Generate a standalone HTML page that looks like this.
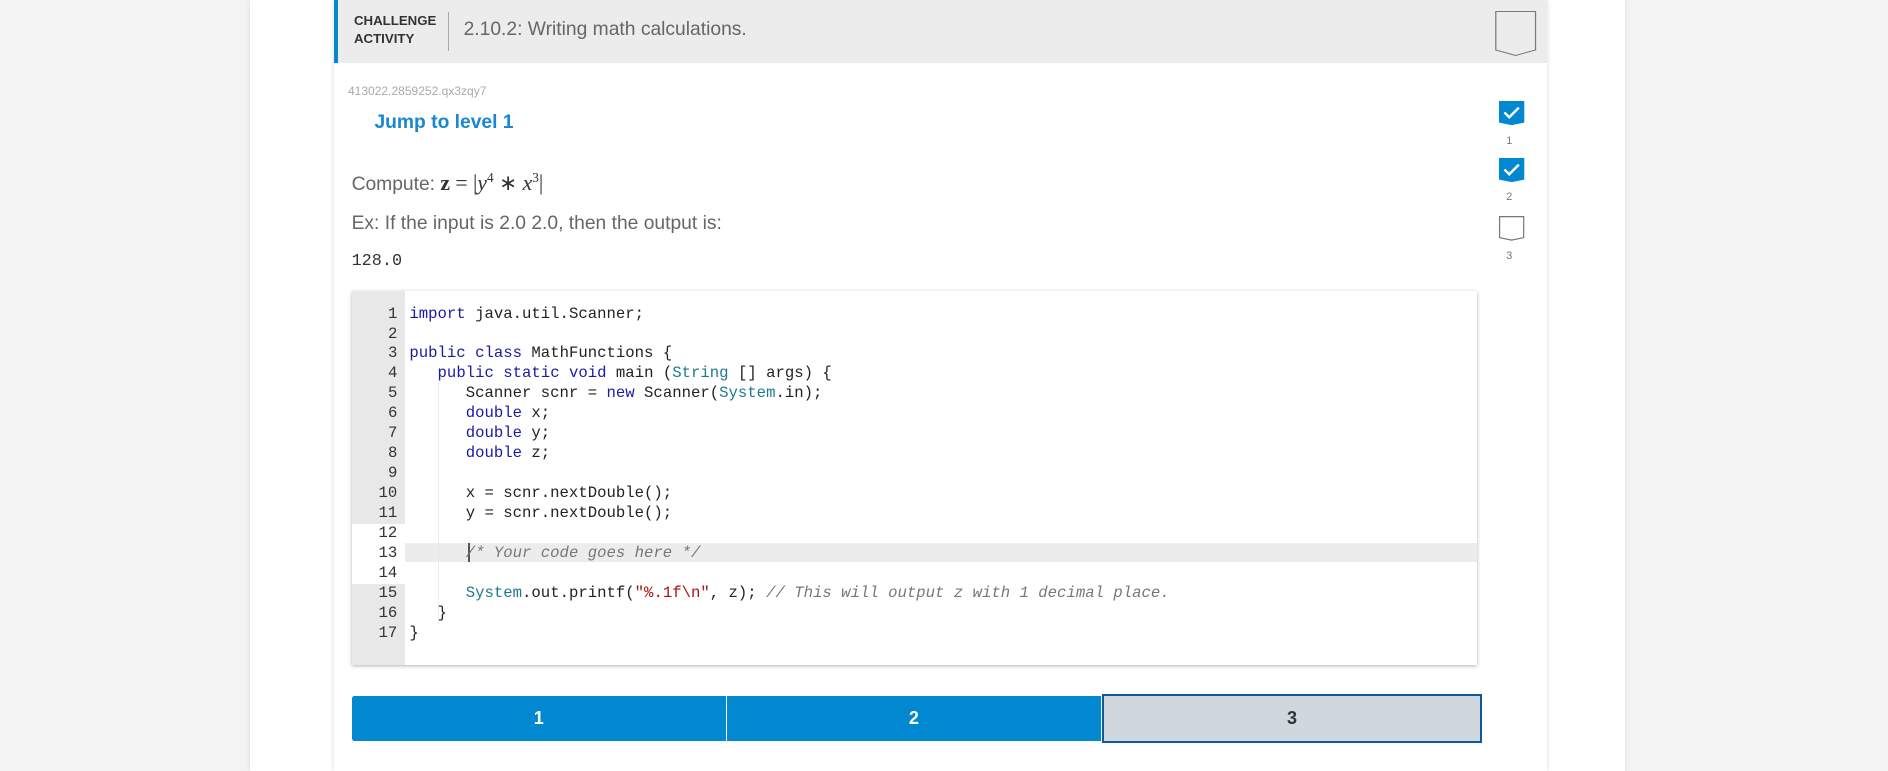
<!DOCTYPE html>
<html><head><meta charset="utf-8"><style>
html,body{margin:0;padding:0;}
body{width:1568px;height:640px;overflow:hidden;background:#f3f3f3;zoom:1.20408;font-family:"Liberation Sans",sans-serif;position:relative;}
.abs{position:absolute;}
#card{left:208px;top:0;width:1142px;height:640px;background:#fff;box-shadow:0 0 3px rgba(0,0,0,.12);}
#inner{left:277px;top:0;width:1008px;height:640px;background:#fff;box-shadow:0 0 4px rgba(0,0,0,.15);}
#hdr{left:277px;top:0;width:1008px;height:52px;background:#ececec;border-left:4px solid #0288d1;box-sizing:border-box;}
.ca{font-weight:bold;font-size:11px;color:#333;line-height:15px;}
.code{font-family:"Liberation Mono",monospace;font-size:13px;white-space:pre;}
.ln{position:absolute;left:292px;width:38px;text-align:right;font-family:"Liberation Mono",monospace;font-size:13px;color:#333;}
.cl{position:absolute;left:340px;font-family:"Liberation Mono",monospace;font-size:13px;white-space:pre;color:#222;}
.k{color:#1a1aa6}.t{color:#1d7a8c}.c{color:#777;font-style:italic}.s{color:#a11}
.seg{position:absolute;top:578px;height:37px;background:#0288d1;color:#fff;font-weight:bold;font-size:15px;text-align:center;line-height:37px;}
</style></head><body>
<div class="abs" id="card"></div>
<div class="abs" id="inner"></div>
<div class="abs" id="hdr"></div>
<div class="abs ca" style="left:294px;top:10px">CHALLENGE<br>ACTIVITY</div>
<div class="abs" style="left:372px;top:10px;width:1px;height:32px;background:#aaa"></div>
<div class="abs" style="left:385px;top:16px;font-size:16px;color:#666">2.10.2: Writing math calculations.</div>
<svg class="abs" style="left:1241px;top:8px" width="36" height="40"><path d="M1.5 1.5H34.5V40.5L18 46 1.5 40.5Z" transform="scale(1,0.82)" fill="none" stroke="#777" stroke-width="1"/></svg>
<div class="abs" style="left:289px;top:70px;font-size:10px;color:#aaa">413022.2859252.qx3zqy7</div>
<div class="abs" style="left:311px;top:93px;font-size:16px;font-weight:bold;color:#1a87d0">Jump to level 1</div>
<div class="abs" style="left:292px;top:141px;font-size:16px;color:#666">Compute: <span style="font-family:'Liberation Serif',serif;font-size:18px;color:#333"><b>z</b> = |<i>y</i><sup style="font-size:11px">4</sup> ∗ <i>x</i><sup style="font-size:11px">3</sup>|</span></div>
<div class="abs" style="left:292px;top:177px;font-size:16px;color:#666">Ex: If the input is 2.0 2.0, then the output is:</div>
<div class="abs code" style="left:292px;top:209px;font-size:14px;color:#333">128.0</div>
<svg class="abs" style="left:1245px;top:84px" width="22" height="22"><path d="M0 0H21V18L10.5 20 0 18Z" fill="#0288d1"/><path d="M4.5 9.5l4 4 8-8" stroke="#fff" stroke-width="2" fill="none"/></svg>
<div class="abs" style="left:1251px;top:112px;font-size:9px;color:#777">1</div>
<svg class="abs" style="left:1245px;top:131px" width="22" height="22"><path d="M0 0H21V18L10.5 20 0 18Z" fill="#0288d1"/><path d="M4.5 9.5l4 4 8-8" stroke="#fff" stroke-width="2" fill="none"/></svg>
<div class="abs" style="left:1251px;top:159px;font-size:9px;color:#777">2</div>
<svg class="abs" style="left:1245px;top:179px" width="22" height="22"><path d="M0.5 .5H20.5V18L10.5 20 .5 18Z" fill="#fff" stroke="#777"/></svg>
<div class="abs" style="left:1251px;top:208px;font-size:9px;color:#777">3</div>
<div class="abs" style="left:292px;top:242px;width:935px;height:310px;background:#fff;box-shadow:0 1px 3px rgba(0,0,0,.3)"></div>
<div class="abs" style="left:292px;top:242px;width:44px;height:310px;background:#e8e8e8"></div>
<div class="abs" style="left:292px;top:435px;width:44px;height:50px;background:#fff"></div>
<div class="abs" style="left:336px;top:451px;width:891px;height:16px;background:#ececec"></div>
<div class="abs" style="left:364px;top:318px;width:1px;height:200px;border-left:1px dotted #ddd"></div>
<div class="abs" style="left:389px;top:451px;width:1px;height:16px;background:#555"></div>
<div style="position:absolute;top:253px;left:0;line-height:16.56px">
<div class="ln" style="top:0">1</div><div class="ln" style="top:16.56px">2</div><div class="ln" style="top:33.1px">3</div><div class="ln" style="top:49.7px">4</div><div class="ln" style="top:66.2px">5</div><div class="ln" style="top:82.8px">6</div><div class="ln" style="top:99.4px">7</div><div class="ln" style="top:115.9px">8</div><div class="ln" style="top:132.5px">9</div><div class="ln" style="top:149px">10</div><div class="ln" style="top:165.6px">11</div><div class="ln" style="top:182.2px">12</div><div class="ln" style="top:198.7px">13</div><div class="ln" style="top:215.3px">14</div><div class="ln" style="top:231.8px">15</div><div class="ln" style="top:248.4px">16</div><div class="ln" style="top:265px">17</div>
<div class="cl" style="top:0"><span class="k">import</span> java.util.Scanner;</div>
<div class="cl" style="top:33.1px"><span class="k">public</span> <span class="k">class</span> MathFunctions {</div>
<div class="cl" style="top:49.7px">   <span class="k">public</span> <span class="k">static</span> <span class="k">void</span> main (<span class="t">String</span> [] args) {</div>
<div class="cl" style="top:66.2px">      Scanner scnr = <span class="k">new</span> Scanner(<span class="t">System</span>.in);</div>
<div class="cl" style="top:82.8px">      <span class="k">double</span> x;</div>
<div class="cl" style="top:99.4px">      <span class="k">double</span> y;</div>
<div class="cl" style="top:115.9px">      <span class="k">double</span> z;</div>
<div class="cl" style="top:149px">      x = scnr.nextDouble();</div>
<div class="cl" style="top:165.6px">      y = scnr.nextDouble();</div>
<div class="cl" style="top:198.7px">      <span class="c">/* Your code goes here */</span></div>
<div class="cl" style="top:231.8px">      <span class="t">System</span>.out.printf(<span class="s">"%.1f\n"</span>, z); <span class="c">// This will output z with 1 decimal place.</span></div>
<div class="cl" style="top:248.4px">   }</div>
<div class="cl" style="top:265px">}</div>
</div>
<div class="seg" style="left:292px;width:311px;border-radius:2px 0 0 2px">1</div>
<div class="seg" style="left:604px;width:310px">2</div>
<div class="seg" style="left:915px;top:576px;width:316px;height:41px;box-sizing:border-box;border:2px solid #0b5a9c;background:#cfd8dc;color:#333;line-height:37px">3</div>
</body></html>
